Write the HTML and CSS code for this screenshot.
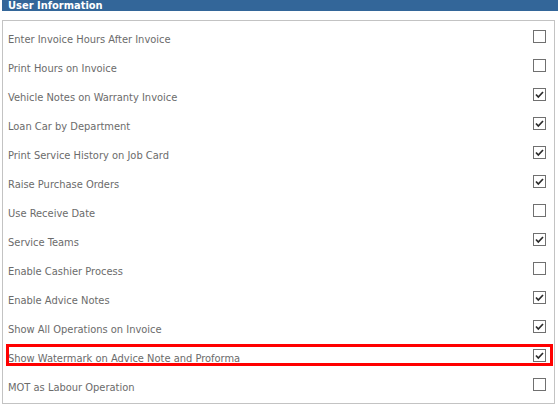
FILE: index.html
```html
<!DOCTYPE html>
<html>
<head>
<meta charset="utf-8">
<link rel="stylesheet" href="styles.css">
</head>
<body>
<div class="page">
  <div class="header">User Information</div>
  <div class="panel">
    <div class="row"><span class="label">Enter Invoice Hours After Invoice</span><span class="cb"></span></div>
    <div class="row"><span class="label">Print Hours on Invoice</span><span class="cb"></span></div>
    <div class="row"><span class="label">Vehicle Notes on Warranty Invoice</span><span class="cb checked"><svg viewBox="0 0 11 11" width="11" height="11"><polyline points="2,5.5 4.3,8 9,3"/></svg></span></div>
    <div class="row"><span class="label">Loan Car by Department</span><span class="cb checked"><svg viewBox="0 0 11 11" width="11" height="11"><polyline points="2,5.5 4.3,8 9,3"/></svg></span></div>
    <div class="row"><span class="label">Print Service History on Job Card</span><span class="cb checked"><svg viewBox="0 0 11 11" width="11" height="11"><polyline points="2,5.5 4.3,8 9,3"/></svg></span></div>
    <div class="row"><span class="label">Raise Purchase Orders</span><span class="cb checked"><svg viewBox="0 0 11 11" width="11" height="11"><polyline points="2,5.5 4.3,8 9,3"/></svg></span></div>
    <div class="row"><span class="label">Use Receive Date</span><span class="cb"></span></div>
    <div class="row"><span class="label">Service Teams</span><span class="cb checked"><svg viewBox="0 0 11 11" width="11" height="11"><polyline points="2,5.5 4.3,8 9,3"/></svg></span></div>
    <div class="row"><span class="label">Enable Cashier Process</span><span class="cb"></span></div>
    <div class="row"><span class="label">Enable Advice Notes</span><span class="cb checked"><svg viewBox="0 0 11 11" width="11" height="11"><polyline points="2,5.5 4.3,8 9,3"/></svg></span></div>
    <div class="row"><span class="label">Show All Operations on Invoice</span><span class="cb checked"><svg viewBox="0 0 11 11" width="11" height="11"><polyline points="2,5.5 4.3,8 9,3"/></svg></span></div>
    <div class="row highlighted"><span class="label">Show Watermark on Advice Note and Proforma</span><span class="cb checked"><svg viewBox="0 0 11 11" width="11" height="11"><polyline points="2,5.5 4.3,8 9,3"/></svg></span><span class="mark"></span></div>
    <div class="row"><span class="label">MOT as Labour Operation</span><span class="cb"></span></div>
  </div>
</div>
</body>
</html>
```
FILE: styles.css
```css
html, body {
  margin: 0;
  padding: 0;
  background: #ffffff;
}
body {
  font-family: "DejaVu Sans Condensed", "DejaVu Sans", sans-serif;
  font-size: 11px;
}
.page {
  padding-left: 2px;
}
.header {
  height: 11px;
  overflow: hidden;
  background: #336699;
  color: #ffffff;
  font-weight: bold;
  font-size: 11px;
  line-height: 11px;
  padding-left: 6px;
}
.panel {
  margin-top: 9px;
  width: 553px;
  box-sizing: border-box;
  border: 1px solid #c3c3c3;
  padding: 4px 0 1px 0;
}
.row {
  position: relative;
  height: 29px;
  display: flex;
  justify-content: space-between;
  align-items: flex-start;
}
.label {
  padding-left: 5px;
  line-height: 29px;
  color: #6b6b6b;
  white-space: nowrap;
}
.cb {
  margin-top: 5px;
  margin-right: 8px;
  width: 13px;
  height: 13px;
  box-sizing: border-box;
  border: 1px solid #707070;
  background: #ffffff;
  display: flex;
}
.cb svg {
  display: block;
}
.cb polyline {
  fill: none;
  stroke: #2b2b2b;
  stroke-width: 1.7;
}
.mark {
  position: absolute;
  left: 3px;
  right: 1px;
  top: 0;
  height: 22px;
  box-sizing: border-box;
  border: 3px solid #ff0000;
}
```
